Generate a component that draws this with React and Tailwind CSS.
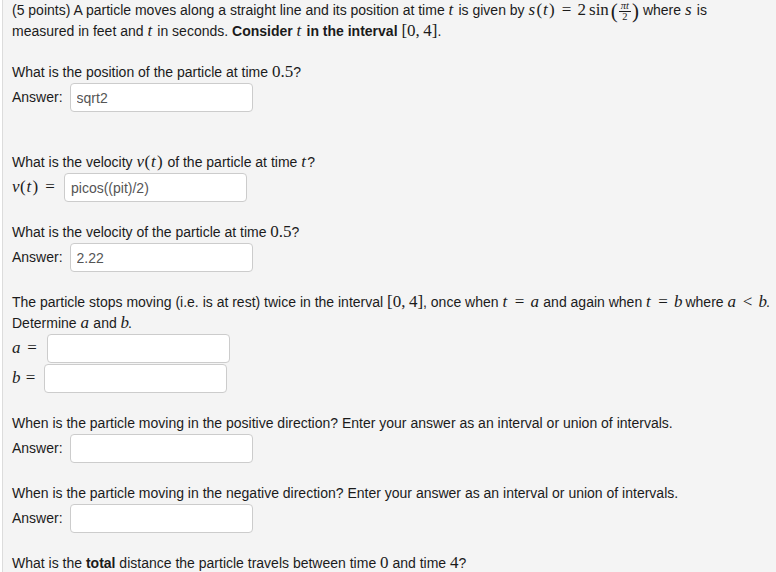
import React from "react";

const M = ({ children, className = "" }) => (
  <span className={"font-['Liberation_Serif',serif] text-[17px] leading-none " + className}>{children}</span>
);
const T = () => <M className="italic inline-block w-[6px]">t</M>;
const S = () => <M className="italic inline-block w-[8px]">s</M>;
const A = () => <M className="italic inline-block w-[9px]">a</M>;
const B = () => <M className="italic inline-block w-[7.5px]">b</M>;
const Vv = () => <M className="italic inline-block w-[8px]">v</M>;
const Lp = () => <M className="inline-block w-[6.5px]">(</M>;
const Rp = () => <M className="inline-block w-[6.5px]">)</M>;
const Eq = () => <M className="inline-block w-[12px] mx-[5px] text-center">=</M>;
const Lt = () => <M className="inline-block w-[12px] mx-[5px] text-center">&lt;</M>;
const Iv = () => <M>[0,{"\u2009"}4]</M>;

const Box = ({ value = "", className = "" }) => (
  <input
    readOnly
    value={value}
    className={"block h-[29px] w-[183px] rounded-[4px] border border-[#cccccc] bg-white px-[6px] text-[14px] text-[#555] outline-none font-['Liberation_Sans',Arial,sans-serif] " + className}
  />
);

const Line = ({ children, className = "" }) => (
  <div className={"h-[21px] leading-[21px] whitespace-nowrap " + className}>{children}</div>
);

const AnswerRow = ({ value }) => (
  <div className="flex items-center h-[29px]">
    <span>Answer:</span>
    <Box value={value} className="ml-[7px]" />
  </div>
);

export default function App() {
  return (
    <div className="w-[776px] h-[572px] overflow-hidden bg-white pl-[2px]">
      <div className="h-full border-l border-[#dcdcdc] bg-[#f4f4f4] pl-[9px] text-[14px] text-[#1b1b1b] font-['Liberation_Sans',Arial,sans-serif]">
        <Line>
          (5 points) A particle moves along a straight line and its position at time <T /> is given by{" "}
          <S />
          <Lp />
          <T />
          <Rp />
          <Eq />
          <M>2</M>
          <M className="ml-[3px]">sin</M>
          <span className="inline-flex items-center align-middle h-[20px]">
            <M className="text-[21px] ml-[2px]">(</M>
            <span className="inline-flex flex-col items-center font-['Liberation_Serif',serif] text-[10.5px] mx-[1px]">
              <span className="italic px-[2px] leading-[10px]">πt</span>
              <span className="border-t border-[#1b1b1b] w-full text-center leading-[10px]">2</span>
            </span>
            <M className="text-[21px]">)</M>
          </span>{" "}
          where <S /> is
        </Line>
        <Line>
          measured in feet and <T /> in seconds. <b>Consider </b>
          <T />
          <b> in the interval </b>
          <Iv />.
        </Line>

        <Line className="mt-[20px]">
          What is the position of the particle at time <M>0.5</M>?
        </Line>
        <AnswerRow value="sqrt2" />

        <Line className="mt-[40px]">
          What is the velocity <Vv />
          <Lp />
          <T />
          <Rp /> of the particle at time <T />?
        </Line>
        <div className="flex items-center h-[29px]">
          <span>
            <Vv />
            <Lp />
            <T />
            <Rp />
            <Eq />
          </span>
          <Box value="picos((pit)/2)" className="ml-[3px]" />
        </div>

        <Line className="mt-[20px]">
          What is the velocity of the particle at time <M>0.5</M>?
        </Line>
        <AnswerRow value="2.22" />

        <Line className="mt-[20px]">
          The particle stops moving (i.e. is at rest) twice in the interval <Iv />, once when <T />
          <Eq />
          <A /> and again when <T />
          <Eq />
          <B /> where <A />
          <Lt />
          <B />.
        </Line>
        <Line>
          Determine <A /> and <B />.
        </Line>
        <div className="flex items-center h-[29px]">
          <span>
            <A />
            <Eq />
          </span>
          <Box className="ml-[4px]" />
        </div>
        <div className="flex items-center h-[29px] mt-[1px]">
          <span>
            <B />
            <Eq />
          </span>
          <Box className="ml-[2px]" />
        </div>

        <Line className="mt-[20px]">
          When is the particle moving in the positive direction? Enter your answer as an interval or union of intervals.
        </Line>
        <AnswerRow value="" />

        <Line className="mt-[20px]">
          When is the particle moving in the negative direction? Enter your answer as an interval or union of intervals.
        </Line>
        <AnswerRow value="" />

        <Line className="mt-[20px]">
          What is the <b>total</b> distance the particle travels between time <M>0</M> and time <M>4</M>?
        </Line>
      </div>
    </div>
  );
}
